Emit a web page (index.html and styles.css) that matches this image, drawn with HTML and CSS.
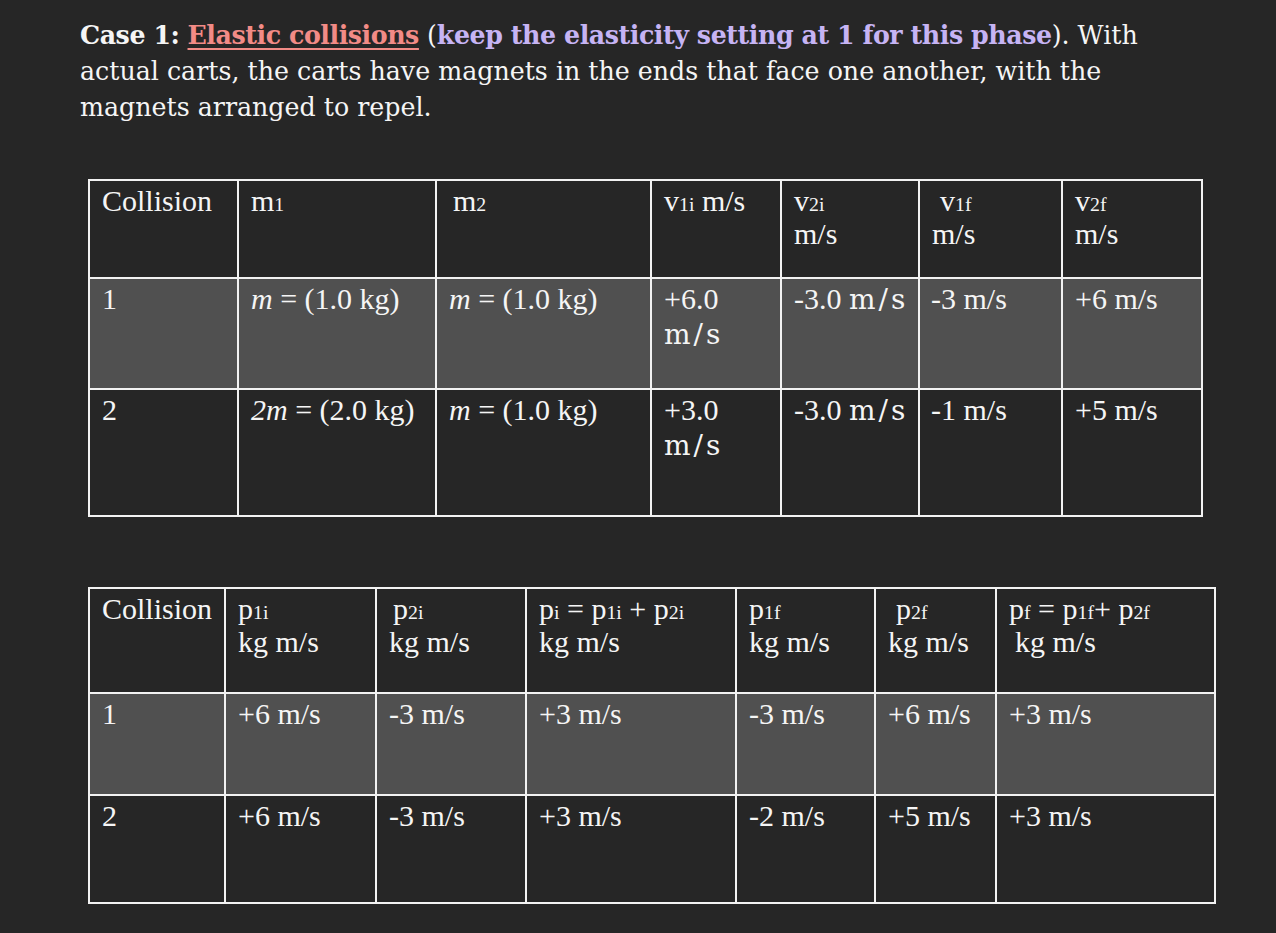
FILE: index.html
```html
<!DOCTYPE html>
<html lang="en">
<head>
<meta charset="utf-8">
<title>Case 1: Elastic collisions</title>
<link rel="stylesheet" href="styles.css">
</head>
<body>
<div class="page">
  <p class="intro"><b>Case 1:</b> <b class="link">Elastic collisions</b> (<b class="hl">keep the elasticity setting at 1 for this phase</b>). With<br>actual carts, the carts have magnets in the ends that face one another, with the<br>magnets arranged to repel.</p>

  <div class="grid t1">
    <div class="c hd">Collision</div>
    <div class="c hd">m<span class="sub">1</span></div>
    <div class="c hd ind-s">m<span class="sub">2</span></div>
    <div class="c hd">v<span class="sub">1i</span> m/s</div>
    <div class="c hd">v<span class="sub">2i</span><br>m/s</div>
    <div class="c hd ind-l">v<span class="sub">1f</span><br><span class="back">m/s</span></div>
    <div class="c hd">v<span class="sub">2f</span><br>m/s</div>

    <div class="c r1">1</div>
    <div class="c r1"><i>m</i> = (1.0 kg)</div>
    <div class="c r1"><i>m</i> = (1.0 kg)</div>
    <div class="c r1">+6.0<br><span class="alt">m/s</span></div>
    <div class="c r1">-3.0 <span class="alt">m/s</span></div>
    <div class="c r1 tight">-3 m/s</div>
    <div class="c r1">+6 m/s</div>

    <div class="c">2</div>
    <div class="c"><i>2m</i> = (2.0 kg)</div>
    <div class="c"><i>m</i> = (1.0 kg)</div>
    <div class="c">+3.0<br><span class="alt">m/s</span></div>
    <div class="c">-3.0 <span class="alt">m/s</span></div>
    <div class="c tight">-1 m/s</div>
    <div class="c">+5 m/s</div>
  </div>

  <div class="grid t2">
    <div class="c hd">Collision</div>
    <div class="c hd">p<span class="sub">1i</span><br>kg m/s</div>
    <div class="c hd ind-s">p<span class="sub">2i</span><br><span class="back-s">kg m/s</span></div>
    <div class="c hd">p<span class="sub">i</span> = p<span class="sub">1i</span> + p<span class="sub">2i</span><br>kg m/s</div>
    <div class="c hd">p<span class="sub">1f</span><br>kg m/s</div>
    <div class="c hd ind-l">p<span class="sub">2f</span><br><span class="back">kg m/s</span></div>
    <div class="c hd">p<span class="sub">f</span> = p<span class="sub">1f</span>+ p<span class="sub">2f</span><br><span class="fwd">kg m/s</span></div>

    <div class="c r1">1</div>
    <div class="c r1">+6 m/s</div>
    <div class="c r1">-3 m/s</div>
    <div class="c r1">+3 m/s</div>
    <div class="c r1">-3 m/s</div>
    <div class="c r1">+6 m/s</div>
    <div class="c r1">+3 m/s</div>

    <div class="c">2</div>
    <div class="c">+6 m/s</div>
    <div class="c">-3 m/s</div>
    <div class="c">+3 m/s</div>
    <div class="c">-2 m/s</div>
    <div class="c">+5 m/s</div>
    <div class="c">+3 m/s</div>
  </div>
</div>
</body>
</html>
```

FILE: styles.css
```css
html, body {
  margin: 0;
  background: #262626;
  color: #f5f5f5;
}

.page {
  padding: 17px 0 0 80px;
}

.intro {
  margin: 0;
  font-family: "DejaVu Serif", serif;
  font-size: 25.3px;
  line-height: 36px;
  white-space: nowrap;
}

.intro b {
  font-weight: bold;
  letter-spacing: -0.45px;
}

.link {
  color: #f28b86;
  text-decoration: underline;
  text-underline-offset: 4px;
  text-decoration-thickness: 1.5px;
}

.hl {
  color: #c6b4f4;
}

.grid {
  display: grid;
  width: max-content;
  margin-left: 8px;
  border-left: 2px solid #f2f2f2;
  border-top: 2px solid #f2f2f2;
  font-family: "Liberation Serif", "Times New Roman", serif;
  font-size: 30px;
  line-height: 35px;
}

.t1 {
  margin-top: 53px;
  grid-template-columns: 149px 198px 215px 130px 138px 143px 140px;
  grid-template-rows: 98px 111px 127px;
}

.t2 {
  margin-top: 70px;
  grid-template-columns: 136px 151px 150px 210px 139px 121px 219px;
  grid-template-rows: 105px 102px 108px;
}

.c {
  box-sizing: border-box;
  padding: 2px 4px 0 12px;
  border-right: 2px solid #f2f2f2;
  border-bottom: 2px solid #f2f2f2;
  background: #262626;
  white-space: nowrap;
}

.hd {
  line-height: 30px;
  padding-top: 4.5px;
}

.r1 {
  background: #505050;
}

.sub {
  font-size: 0.66em;
}

.ind-s {
  padding-left: 16px;
}

.ind-l {
  padding-left: 20px;
}

.back {
  margin-left: -8px;
}

.back-s {
  margin-left: -4px;
}

.fwd {
  margin-left: 6px;
}

.tight {
  padding-left: 11px;
}

.alt {
  font-family: "DejaVu Serif", serif;
  font-size: 28px;
  letter-spacing: 3px;
}
```
